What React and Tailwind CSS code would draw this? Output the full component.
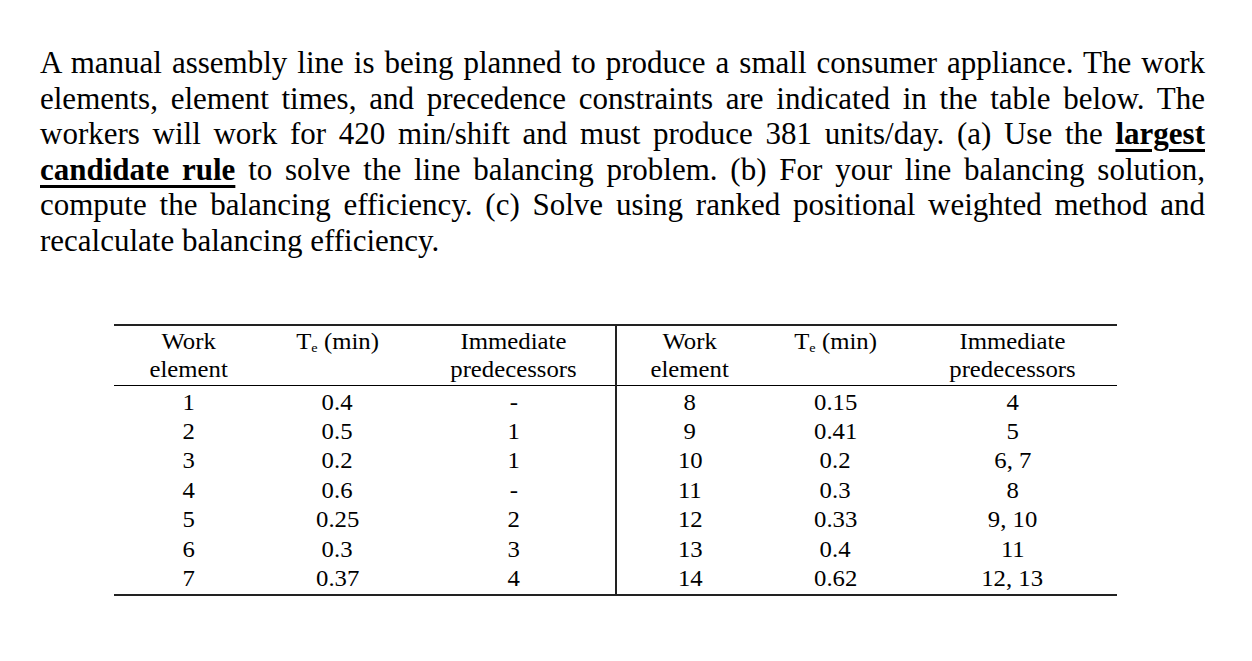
import React from "react";

const leftRows = [
  ["1", "0.4", "-"],
  ["2", "0.5", "1"],
  ["3", "0.2", "1"],
  ["4", "0.6", "-"],
  ["5", "0.25", "2"],
  ["6", "0.3", "3"],
  ["7", "0.37", "4"],
];

const rightRows = [
  ["8", "0.15", "4"],
  ["9", "0.41", "5"],
  ["10", "0.2", "6, 7"],
  ["11", "0.3", "8"],
  ["12", "0.33", "9, 10"],
  ["13", "0.4", "11"],
  ["14", "0.62", "12, 13"],
];

function Wide({ children }) {
  return <span className="inline-block [transform:scaleX(1.1)]">{children}</span>;
}

function Half({ gridClass, rows }) {
  return (
    <div className="flex flex-col">
      <div className={`grid ${gridClass} border-b border-black pt-[2.4px] pb-[1px] leading-[28px] text-center`}>
        <div>
          <Wide>
            Work
            <br />
            element
          </Wide>
        </div>
        <div>
          <Wide>
            T<span className="relative top-[3px] text-[13px]">e</span> (min)
          </Wide>
        </div>
        <div>
          <Wide>
            Immediate
            <br />
            predecessors
          </Wide>
        </div>
      </div>
      <div className="pt-[1.2px]">
        {rows.map((r, i) => (
          <div key={i} className={`grid ${gridClass} h-[29.45px] leading-[29.45px] text-center`}>
            <div>
              <Wide>{r[0]}</Wide>
            </div>
            <div>
              <Wide>{r[1]}</Wide>
            </div>
            <div>
              <Wide>{r[2]}</Wide>
            </div>
          </div>
        ))}
      </div>
    </div>
  );
}

export default function App() {
  const lineCls = "text-justify [text-align-last:justify]";
  return (
    <div className="w-[1252px] h-[661px] bg-white overflow-hidden text-black font-['Liberation_Serif',_'Times_New_Roman',_serif]">
      <div className="pl-[40px] pr-[47px] pt-[45px] text-[31px] leading-[35.6px]">
        <div className={lineCls}>
          A manual assembly line is being planned to produce a small consumer appliance. The work
        </div>
        <div className={lineCls}>
          elements, element times, and precedence constraints are indicated in the table below. The
        </div>
        <div className={lineCls}>
          workers will work for 420 min/shift and must produce 381 units/day. (a) Use the{" "}
          <span className="font-bold underline decoration-[3px] underline-offset-[5px]">largest</span>
        </div>
        <div className={lineCls}>
          <span className="font-bold underline decoration-[3px] underline-offset-[5px]">candidate rule</span>{" "}
          to solve the line balancing problem. (b) For your line balancing solution,
        </div>
        <div className={lineCls}>
          compute the balancing efficiency. (c) Solve using ranked positional weighted method and
        </div>
        <div className="text-left">recalculate balancing efficiency.</div>
      </div>

      <div className="ml-[114px] mt-[65.4px] w-[1003px] flex border-t-2 border-b-2 border-[#222] text-[22.5px]">
        <Half gridClass="grid-cols-[149px_149px_203px]" rows={leftRows} />
        <div className="w-[2px] bg-[#222]" />
        <Half gridClass="grid-cols-[146px_145px_209px]" rows={rightRows} />
      </div>
    </div>
  );
}
